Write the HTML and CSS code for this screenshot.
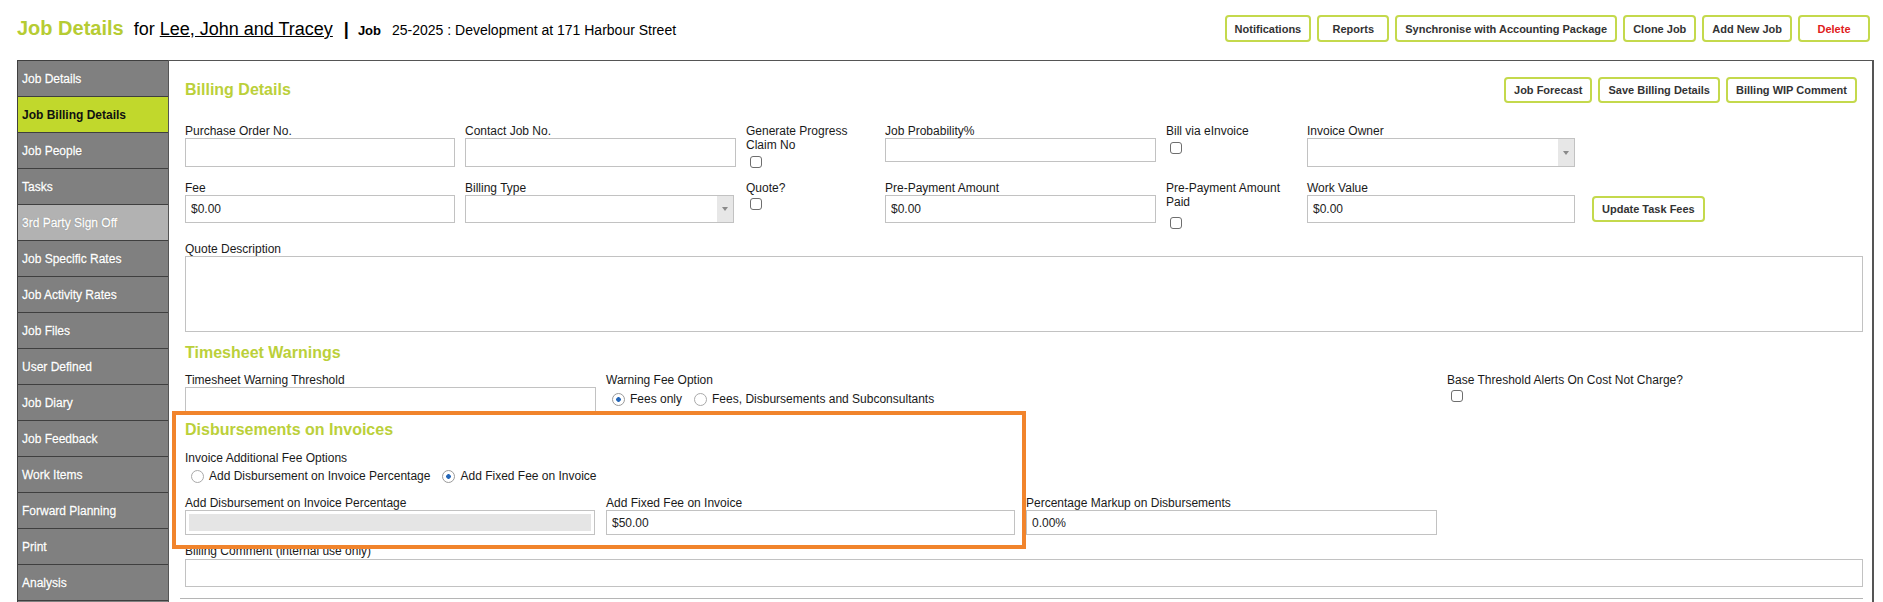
FILE: index.html
```html
<!DOCTYPE html>
<html lang="en">
<head>
<meta charset="utf-8">
<title>Job Details</title>
<link rel="stylesheet" href="styles.css">
</head>
<body>
<header class="topbar">
  <div class="crumb">
    <h1 class="page-title">Job Details</h1>
    <span class="for">for <a class="client">Lee, John and Tracey</a></span>
    <span class="sep">|</span>
    <span class="job-label">Job</span>
    <span class="job-name">25-2025 : Development at 171 Harbour Street</span>
  </div>
  <div class="actions">
    <button class="btn">Notifications</button>
    <button class="btn">Reports</button>
    <button class="btn">Synchronise with Accounting Package</button>
    <button class="btn">Clone Job</button>
    <button class="btn">Add New Job</button>
    <button class="btn btn-danger">Delete</button>
  </div>
</header>

<div class="layout">
  <nav class="sidebar">
    <div class="nav-item">Job Details</div>
    <div class="nav-item active">Job Billing Details</div>
    <div class="nav-item">Job People</div>
    <div class="nav-item">Tasks</div>
    <div class="nav-item muted">3rd Party Sign Off</div>
    <div class="nav-item">Job Specific Rates</div>
    <div class="nav-item">Job Activity Rates</div>
    <div class="nav-item">Job Files</div>
    <div class="nav-item">User Defined</div>
    <div class="nav-item">Job Diary</div>
    <div class="nav-item">Job Feedback</div>
    <div class="nav-item">Work Items</div>
    <div class="nav-item">Forward Planning</div>
    <div class="nav-item">Print</div>
    <div class="nav-item">Analysis</div>
    <div class="nav-item">Job History</div>
  </nav>

  <main class="panel">
    <div class="panel-head">
      <h2 class="section-title">Billing Details</h2>
      <div class="panel-actions">
        <button class="btn btn-sm">Job Forecast</button>
        <button class="btn btn-sm">Save Billing Details</button>
        <button class="btn btn-sm">Billing WIP Comment</button>
      </div>
    </div>

    <div class="billing-grid">
      <div class="field">
        <label class="lbl">Purchase Order No.</label>
        <div class="input tall"></div>
      </div>
      <div class="field">
        <label class="lbl">Contact Job No.</label>
        <div class="input tall"></div>
      </div>
      <div class="field">
        <label class="lbl">Generate Progress Claim No</label>
        <input type="checkbox" class="check">
      </div>
      <div class="field">
        <label class="lbl">Job Probability%</label>
        <div class="input short"></div>
      </div>
      <div class="field">
        <label class="lbl">Bill via eInvoice</label>
        <input type="checkbox" class="check">
      </div>
      <div class="field">
        <label class="lbl">Invoice Owner</label>
        <div class="select"><span class="select-arrow"><span class="tri"></span></span></div>
      </div>
      <div class="field"></div>

      <div class="field">
        <label class="lbl">Fee</label>
        <div class="input">$0.00</div>
      </div>
      <div class="field">
        <label class="lbl">Billing Type</label>
        <div class="select narrow"><span class="select-arrow"><span class="tri"></span></span></div>
      </div>
      <div class="field">
        <label class="lbl">Quote?</label>
        <input type="checkbox" class="check check-tight">
      </div>
      <div class="field">
        <label class="lbl">Pre-Payment Amount</label>
        <div class="input">$0.00</div>
      </div>
      <div class="field">
        <label class="lbl">Pre-Payment Amount Paid</label>
        <input type="checkbox" class="check check-low">
      </div>
      <div class="field">
        <label class="lbl">Work Value</label>
        <div class="input">$0.00</div>
      </div>
      <div class="field">
        <button class="btn btn-sm btn-inline">Update Task Fees</button>
      </div>
    </div>

    <div class="field quote">
      <label class="lbl">Quote Description</label>
      <div class="textarea"></div>
    </div>

    <h2 class="section-title ts-title">Timesheet Warnings</h2>
    <div class="ts-grid">
      <div class="field">
        <label class="lbl">Timesheet Warning Threshold</label>
        <div class="input"></div>
      </div>
      <div class="field">
        <label class="lbl">Warning Fee Option</label>
        <div class="radio-row">
          <label class="radio-opt"><input type="radio" name="wfo" class="radio" checked>Fees only</label>
          <label class="radio-opt"><input type="radio" name="wfo" class="radio">Fees, Disbursements and Subconsultants</label>
        </div>
      </div>
      <div class="field">
        <label class="lbl">Base Threshold Alerts On Cost Not Charge?</label>
        <input type="checkbox" class="check check-tight">
      </div>
    </div>

    <section class="disb">
      <div class="highlight"></div>
      <h2 class="section-title">Disbursements on Invoices</h2>
      <label class="lbl fee-opt-lbl">Invoice Additional Fee Options</label>
      <div class="radio-row fee-opts">
        <label class="radio-opt"><input type="radio" name="afo" class="radio">Add Disbursement on Invoice Percentage</label>
        <label class="radio-opt"><input type="radio" name="afo" class="radio" checked>Add Fixed Fee on Invoice</label>
      </div>
      <div class="disb-grid">
        <div class="field">
          <label class="lbl">Add Disbursement on Invoice Percentage</label>
          <div class="input thin disabled"><span class="fill"></span></div>
        </div>
        <div class="field">
          <label class="lbl">Add Fixed Fee on Invoice</label>
          <div class="input thin">$50.00</div>
        </div>
        <div class="field">
          <label class="lbl">Percentage Markup on Disbursements</label>
          <div class="input thin">0.00%</div>
        </div>
      </div>
    </section>

    <div class="field comment">
      <label class="lbl">Billing Comment (internal use only)</label>
      <div class="input"></div>
    </div>
    <div class="rule"></div>
  </main>
</div>
</body>
</html>
```

FILE: styles.css
```css
* { box-sizing: border-box; }

html, body {
  margin: 0;
  padding: 0;
  background: #fff;
  font-family: "Liberation Sans", Arial, sans-serif;
  color: #1a1a1a;
}

body { height: 602px; overflow: hidden; }

/* ---------- top bar ---------- */
.topbar {
  display: flex;
  justify-content: space-between;
  height: 60px;
  padding: 0 13px 0 17px;
}

.crumb {
  display: flex;
  align-items: baseline;
  padding-top: 17px;
  white-space: nowrap;
}

.page-title {
  margin: 0;
  font-size: 20px;
  font-weight: bold;
  color: #b6cc33;
  line-height: 23px;
}

.for {
  margin-left: 10px;
  font-size: 18px;
  color: #000;
}

.client {
  color: #000;
  text-decoration: underline;
}

.sep {
  margin-left: 11px;
  font-size: 18px;
  font-weight: bold;
  color: #000;
}

.job-label {
  margin-left: 9px;
  font-size: 13px;
  font-weight: bold;
  color: #000;
}

.job-name {
  margin-left: 11px;
  font-size: 14px;
  color: #000;
}

.actions {
  display: flex;
  gap: 6px;
  padding-top: 15px;
  align-items: flex-start;
}

.btn {
  height: 27px;
  min-width: 72px;
  padding: 0 8px;
  border: 2px solid #c4d94c;
  border-radius: 4px;
  background: #fff;
  font-family: "Liberation Sans", Arial, sans-serif;
  font-size: 11px;
  font-weight: bold;
  color: #333;
  white-space: nowrap;
  cursor: pointer;
}

.btn-danger { color: #e0201b; }

.btn-sm { height: 26px; }

/* ---------- layout ---------- */
.layout {
  display: flex;
  padding: 0 9px 0 17px;
}

.sidebar {
  width: 151px;
  flex: none;
  border-left: 1px solid #3f3f3f;
  border-top: 1px solid #3f3f3f;
}

.nav-item {
  height: 36px;
  display: flex;
  align-items: center;
  padding-left: 4px;
  background: #808080;
  border-bottom: 1px solid #3f3f3f;
  color: #fff;
  font-size: 12px;
  -webkit-text-stroke: 0.35px #fff;
  text-shadow: 0 0 1px rgba(30, 30, 30, 0.8);
  white-space: nowrap;
}

.nav-item.active {
  background: #c1d82c;
  color: #111;
  font-weight: bold;
  -webkit-text-stroke: 0;
  text-shadow: none;
}

.nav-item.muted {
  background: #b2b2b2;
}

.panel {
  flex: 1;
  border: 1px solid #555;
  border-right-width: 2px;
  padding: 0 9px 0 16px;
  min-height: 700px;
}

.panel-head {
  display: flex;
  justify-content: space-between;
  align-items: center;
  height: 26px;
  margin-top: 16px;
}

.panel-actions {
  display: flex;
  gap: 6px;
  margin-right: 6px;
}

.section-title {
  margin: 0;
  font-size: 16px;
  line-height: 18px;
  font-weight: bold;
  color: #bbd03a;
}

/* ---------- fields ---------- */
.field {
  display: flex;
  flex-direction: column;
  align-items: flex-start;
  min-width: 0;
}

.field > * { flex: none; }

.lbl {
  display: block;
  font-size: 12px;
  line-height: 14px;
  color: #1a1a1a;
}

.input {
  width: 100%;
  height: 28px;
  border: 1px solid #c2c2c2;
  background: #fff;
  padding: 0 5px;
  display: flex;
  align-items: center;
  font-size: 12px;
  color: #222;
}

.input.tall { height: 29px; }
.input.short { height: 24px; }
.input.thin { height: 25px; }

.input.disabled { padding: 3px; }

.fill {
  display: block;
  width: 100%;
  height: 100%;
  background: #e5e5e5;
}

.select {
  width: 100%;
  height: 29px;
  border: 1px solid #c2c2c2;
  background: #fff;
  display: flex;
  justify-content: flex-end;
}

.select.narrow { width: 269px; height: 28px; }

.select-arrow {
  width: 16px;
  background: #e7e7e7;
  display: flex;
  align-items: center;
  justify-content: center;
}

.tri {
  width: 0;
  height: 0;
  border-left: 3px solid transparent;
  border-right: 3px solid transparent;
  border-top: 4px solid #8a8a8a;
}

.check {
  appearance: none;
  -webkit-appearance: none;
  display: block;
  width: 12px;
  height: 12px;
  margin: 4px 0 0 4px;
  border: 1px solid #6e6e6e;
  border-radius: 3px;
  background: #fff;
}

.check-low { margin-top: 8px; }
.check-tight { margin-top: 3px; }

.radio-row {
  display: flex;
  align-items: center;
  gap: 6px;
  height: 14px;
  margin-top: 5px;
  font-size: 12px;
  color: #1a1a1a;
}

.radio-opt {
  display: inline-flex;
  align-items: center;
  gap: 5px;
  white-space: nowrap;
}

.radio {
  appearance: none;
  -webkit-appearance: none;
  flex: none;
  width: 13px;
  height: 13px;
  margin: 0 0 0 6px;
  border: 1px solid #a9a9a9;
  border-radius: 50%;
  background: #fff;
}

.radio:checked {
  background: radial-gradient(circle, #2466b8 0 2px, #fff 2.6px);
  border-color: #9a9a9a;
}

/* ---------- billing grid ---------- */
.billing-grid {
  display: grid;
  grid-template-columns: 270px 271px 129px 271px 131px 268px auto;
  grid-template-rows: 43px 42px;
  column-gap: 10px;
  row-gap: 14px;
  margin-top: 21px;
}

.btn-inline { margin: 15px 0 0 7px; }

.quote { margin-top: 19px; }

.textarea {
  width: 100%;
  height: 76px;
  border: 1px solid #c2c2c2;
  background: #fff;
}

.ts-title { margin-top: 12px; }

.ts-grid {
  display: grid;
  grid-template-columns: 411px 831px auto;
  column-gap: 10px;
  margin-top: 11px;
}

/* ---------- disbursements ---------- */
.disb {
  position: relative;
  margin-top: 6px;
}

.highlight {
  position: absolute;
  top: -10px;
  left: -13px;
  width: 854px;
  height: 138px;
  border: 4px solid #f1842c;
  pointer-events: none;
  z-index: 2;
}

.fee-opt-lbl { margin-top: 12px; }

.fee-opts { margin-top: 4px; }

.disb-grid {
  display: grid;
  grid-template-columns: 410px 409px 411px;
  column-gap: 11px;
  margin-top: 13px;
}

.comment { margin-top: 9px; }
.comment .input { margin-top: 1px; }

.rule {
  margin-top: 11px;
  border-top: 1px solid #b5b5b5;
  margin-left: -5px;
}
```
